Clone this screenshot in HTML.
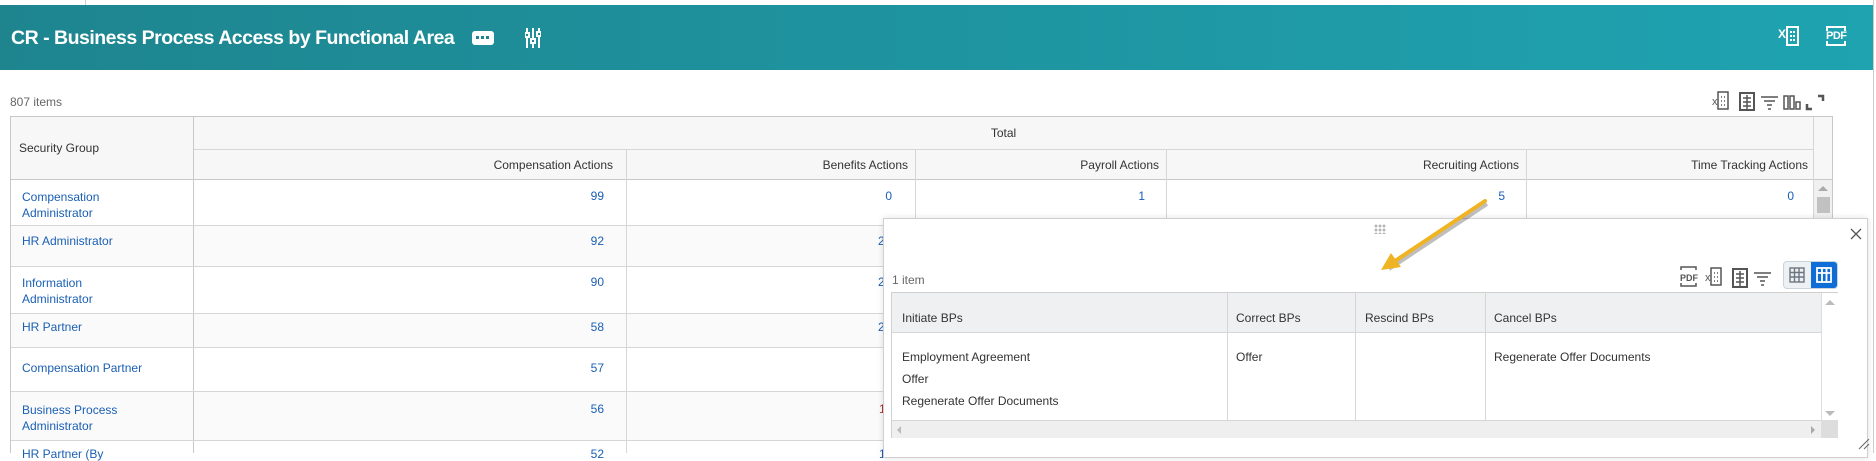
<!DOCTYPE html>
<html><head><meta charset="utf-8"><style>
*{box-sizing:border-box;margin:0;padding:0}
body{width:1876px;height:453px;overflow:hidden;background:#fff;font-family:"Liberation Sans",sans-serif;color:#333;position:relative;font-size:12px}
.a{position:absolute}
.hdr{left:0;top:5px;width:1873px;height:65px;background:linear-gradient(90deg,#1e858f,#1fa3b1)}
.title{left:11px;top:27px;color:#fff;font-weight:bold;font-size:19.5px;letter-spacing:-0.5px}
.lnk{color:#1a5fb4}
.vl{background:#d6d6d6;width:1px}
.hl{background:#d6d6d6;height:1px}
.num{color:#1a5fb4;text-align:right}
</style></head><body>
<div class="a" style="left:85px;top:0;width:1px;height:5px;background:#ccc"></div>
<div class="a hdr"></div>
<div class="a title">CR - Business Process Access by Functional Area</div>
<div class="a" style="left:472px;top:31px;width:22px;height:14px;background:#fff;border-radius:3px"><span style="position:absolute;left:4px;top:5px;width:14px;height:3px;background:repeating-linear-gradient(90deg,#1e8590 0 3px,transparent 3px 5px)"></span></div>
<svg class="a" style="left:525px;top:28px" width="16" height="20" viewBox="0 0 16 20" fill="none" stroke="#fff" stroke-width="2"><path d="M2 0v20M8 0v20M14 0v20"/><rect x="0" y="5" width="4" height="4" fill="#1e8a95"/><rect x="6" y="11" width="4" height="4" fill="#1e8a95"/><rect x="12" y="4" width="4" height="4" fill="#1e8a95"/></svg>
<div class="a" style="left:1778px;top:27px;color:#fff;font-weight:bold;font-size:12px">X</div>
<svg class="a" style="left:1786px;top:26px" width="13" height="20"><rect x="1" y="1" width="11" height="18" fill="none" stroke="#fff" stroke-width="2"/><path d="M4 6h2M7 6h2M4 10h2M7 10h2M4 14h2M7 14h2" stroke="#fff" stroke-width="2"/></svg>
<svg class="a" style="left:1826px;top:26px" width="20" height="20" fill="none" stroke="#fff" stroke-width="2"><path d="M1 5V1h18v4M1 15v4h18v-4"/></svg>
<div class="a" style="left:1826px;top:30px;color:#fff;font-weight:bold;font-size:11px;letter-spacing:-0.5px">PDF</div>
<div class="a" style="left:1873px;top:0;width:1px;height:453px;background:#ccc"></div>

<div class="a" style="left:10px;top:95px;color:#666;font-size:12px">807 items</div>
<svg class="a" style="left:1712px;top:90px" width="120" height="22" fill="none" stroke="#555" stroke-width="1.5">
<text x="0" y="15" font-size="11" fill="#555" stroke="none" font-family="Liberation Sans">x</text><rect x="6" y="2" width="10" height="17"/><path d="M9 7h1M12 7h1M9 11h1M12 11h1M9 15h1M12 15h1"/>
<rect x="28" y="3" width="14" height="17" stroke-width="2"/><path d="M31 8h8M31 12h8M31 16h8M35 5v14"/>
<path d="M49 7h17M52 11h11M55 15h5M56 19h3"/>
<rect x="72" y="6" width="4" height="13"/><rect x="78" y="6" width="4" height="13"/><rect x="84" y="12" width="4" height="7"/>
<path d="M95 14v5h5M111 11v-5h-5" stroke-width="2.5"/></svg>

<div class="a" style="left:10px;top:116px;width:1823px;height:337px;border:1px solid #c8c8c8;border-bottom:none"></div>
<div class="a" style="left:11px;top:117px;width:1802px;height:62px;background:#f7f7f7"></div>
<div class="a" style="left:1814px;top:117px;width:18px;height:62px;background:#f7f7f7"></div>
<div class="a vl" style="left:193px;top:117px;height:336px;background:#c8c8c8"></div>
<div class="a hl" style="left:194px;top:149px;width:1619px"></div>
<div class="a hl" style="left:11px;top:179px;width:1822px;background:#c8c8c8"></div>
<div class="a vl" style="left:1813px;top:117px;height:336px"></div>
<div class="a" style="left:194px;top:126px;width:1619px;text-align:center;font-size:12px">Total</div>
<div class="a" style="left:19px;top:141px;font-size:12px">Security Group</div>
<div class="a vl" style="left:626px;top:150px;height:303px"></div>
<div class="a vl" style="left:915px;top:150px;height:303px"></div>
<div class="a vl" style="left:1166px;top:150px;height:303px"></div>
<div class="a vl" style="left:1526px;top:150px;height:303px"></div>
<div class="a" style="left:194px;top:158px;width:419px;text-align:right">Compensation Actions</div>
<div class="a" style="left:627px;top:158px;width:281px;text-align:right">Benefits Actions</div>
<div class="a" style="left:916px;top:158px;width:243px;text-align:right">Payroll Actions</div>
<div class="a" style="left:1167px;top:158px;width:352px;text-align:right">Recruiting Actions</div>
<div class="a" style="left:1527px;top:158px;width:281px;text-align:right">Time Tracking Actions</div>
<div class="a" style="left:11px;top:225px;width:1802px;height:41px;background:#fafafa"></div>
<div class="a" style="left:11px;top:313px;width:1802px;height:34px;background:#fafafa"></div>
<div class="a" style="left:11px;top:391px;width:1802px;height:49px;background:#fafafa"></div>
<div class="a vl" style="left:193px;top:180px;height:273px;background:#c8c8c8"></div>
<div class="a vl" style="left:626px;top:180px;height:273px"></div>
<div class="a hl" style="left:11px;top:225px;width:1802px"></div>
<div class="a hl" style="left:11px;top:266px;width:1802px"></div>
<div class="a hl" style="left:11px;top:313px;width:1802px"></div>
<div class="a hl" style="left:11px;top:347px;width:1802px"></div>
<div class="a hl" style="left:11px;top:391px;width:1802px"></div>
<div class="a hl" style="left:11px;top:440px;width:1802px"></div>
<div class="a lnk" style="left:22px;top:189px;line-height:16px">Compensation<br>Administrator</div>
<div class="a lnk" style="left:22px;top:234px">HR Administrator</div>
<div class="a lnk" style="left:22px;top:275px;line-height:16px">Information<br>Administrator</div>
<div class="a lnk" style="left:22px;top:320px">HR Partner</div>
<div class="a lnk" style="left:22px;top:361px">Compensation Partner</div>
<div class="a lnk" style="left:22px;top:402px;line-height:16px">Business Process<br>Administrator</div>
<div class="a lnk" style="left:22px;top:447px">HR Partner (By</div>
<div class="a num" style="left:540px;top:189px;width:64px">99</div>
<div class="a num" style="left:540px;top:234px;width:64px">92</div>
<div class="a num" style="left:540px;top:275px;width:64px">90</div>
<div class="a num" style="left:540px;top:320px;width:64px">58</div>
<div class="a num" style="left:540px;top:361px;width:64px">57</div>
<div class="a num" style="left:540px;top:402px;width:64px">56</div>
<div class="a num" style="left:540px;top:447px;width:64px">52</div>
<div class="a num" style="left:840px;top:189px;width:52px">0</div>
<div class="a num" style="left:878px;top:234px">2</div>
<div class="a num" style="left:878px;top:275px">2</div>
<div class="a num" style="left:878px;top:320px">2</div>
<div class="a num" style="left:879px;top:402px;color:#b03030">1</div>
<div class="a num" style="left:879px;top:447px">1</div>
<div class="a num" style="left:1100px;top:189px;width:45px">1</div>
<div class="a num" style="left:1450px;top:189px;width:55px">5</div>
<div class="a num" style="left:1740px;top:189px;width:54px">0</div>
<div class="a" style="left:1814px;top:180px;width:18px;height:40px;background:#f0f0f0"></div>
<div class="a" style="left:1818px;top:186px;border:5px solid transparent;border-bottom:5px solid #aaa;border-top:none"></div>
<div class="a" style="left:1817px;top:197px;width:13px;height:16px;background:#c1c1c1"></div>

<div class="a" style="left:883px;top:218px;width:985px;height:240px;background:#fff;border:1px solid #d0d0d0;box-shadow:0 0 6px rgba(0,0,0,.12)"></div>
<div class="a" style="left:1374px;top:224px;width:12px;height:10px;background:radial-gradient(circle,#b5b5b5 1.3px,transparent 1.6px) 0 0/4px 4px"></div>
<svg class="a" style="left:1850px;top:228px" width="12" height="12" stroke="#555" stroke-width="1.3"><path d="M1 1l10 10M11 1L1 11"/></svg>
<div class="a" style="left:892px;top:273px;color:#666">1 item</div>
<svg class="a" style="left:1680px;top:266px" width="100" height="22" fill="none" stroke="#555" stroke-width="1.5">
<path d="M1 4v-3h15v3M1 17v3h15v-3"/><text x="0" y="15" font-size="9" font-weight="bold" fill="#555" stroke="none" font-family="Liberation Sans">PDF</text>
<text x="25" y="15" font-size="11" fill="#555" stroke="none" font-family="Liberation Sans">x</text><rect x="31" y="2" width="10" height="17"/><path d="M34 7h1M37 7h1M34 11h1M37 11h1M34 15h1M37 15h1"/>
<rect x="53" y="3" width="14" height="18" stroke-width="2"/><path d="M56 8h8M56 12h8M56 16h8M60 5v15"/>
<path d="M74 7h17M77 11h11M80 15h5M81 19h3"/></svg>
<div class="a" style="left:1783px;top:261px;width:55px;height:28px;border:1px solid #c9d4dc;border-radius:4px;background:#eef1f4;overflow:hidden"><div style="position:absolute;left:27px;top:-1px;width:28px;height:28px;background:#0e6dd6"></div></div>
<svg class="a" style="left:1789px;top:267px" width="16" height="16" fill="none" stroke="#6c7680" stroke-width="1.4"><rect x="1" y="1" width="14" height="14"/><path d="M1 5.5h14M1 10h14M5.5 1v14M10 1v14"/></svg>
<svg class="a" style="left:1816px;top:267px" width="16" height="16" fill="none" stroke="#fff" stroke-width="1.8"><rect x="1" y="1" width="14" height="14"/><path d="M1 6h14M6 1v14M10.5 1v14"/></svg>
<div class="a" style="left:891px;top:292px;width:947px;height:146px;border:1px solid #d0d0d0;border-right:none"></div>
<div class="a" style="left:892px;top:293px;width:929px;height:39px;background:#eef0f1"></div>
<div class="a hl" style="left:892px;top:332px;width:929px"></div>
<div class="a" style="left:892px;top:420px;width:929px;height:18px;background:#efefef;border-top:1px solid #d6d6d6"></div>
<div class="a" style="left:1821px;top:293px;width:17px;height:127px;background:#fff;border-left:1px solid #ddd"></div>
<div class="a" style="left:1821px;top:420px;width:17px;height:18px;background:#ddd"></div>
<div class="a" style="left:1825px;top:300px;border:5px solid transparent;border-bottom:5px solid #bbb;border-top:none"></div>
<div class="a" style="left:1825px;top:411px;border:5px solid transparent;border-top:5px solid #bbb;border-bottom:none"></div>
<div class="a" style="left:897px;top:426px;border:4px solid transparent;border-right:4px solid #bbb;border-left:none"></div>
<div class="a" style="left:1811px;top:426px;border:4px solid transparent;border-left:4px solid #aaa;border-right:none"></div>
<div class="a vl" style="left:1227px;top:293px;height:127px"></div>
<div class="a vl" style="left:1355px;top:293px;height:127px"></div>
<div class="a vl" style="left:1485px;top:293px;height:127px"></div>
<div class="a" style="left:902px;top:311px">Initiate BPs</div>
<div class="a" style="left:1236px;top:311px">Correct BPs</div>
<div class="a" style="left:1365px;top:311px">Rescind BPs</div>
<div class="a" style="left:1494px;top:311px">Cancel BPs</div>
<div class="a" style="left:902px;top:346px;line-height:22px">Employment Agreement<br>Offer<br>Regenerate Offer Documents</div>
<div class="a" style="left:1236px;top:350px">Offer</div>
<div class="a" style="left:1494px;top:350px">Regenerate Offer Documents</div>
<svg class="a" style="left:1858px;top:438px" width="12" height="12" stroke="#666"><path d="M1 11L11 1M6 11L11 6"/></svg>
<svg class="a" style="left:1375px;top:195px" width="120" height="82"><g transform="translate(2,3)" opacity=".25"><path d="M110 6L12 71" stroke="#000" stroke-width="4"/></g><path d="M110 6L14 70" stroke="#f0b323" stroke-width="4" stroke-linecap="round"/><path d="M6 75L16 58L26 72Z" fill="#f0b323"/></svg>
</body></html>
